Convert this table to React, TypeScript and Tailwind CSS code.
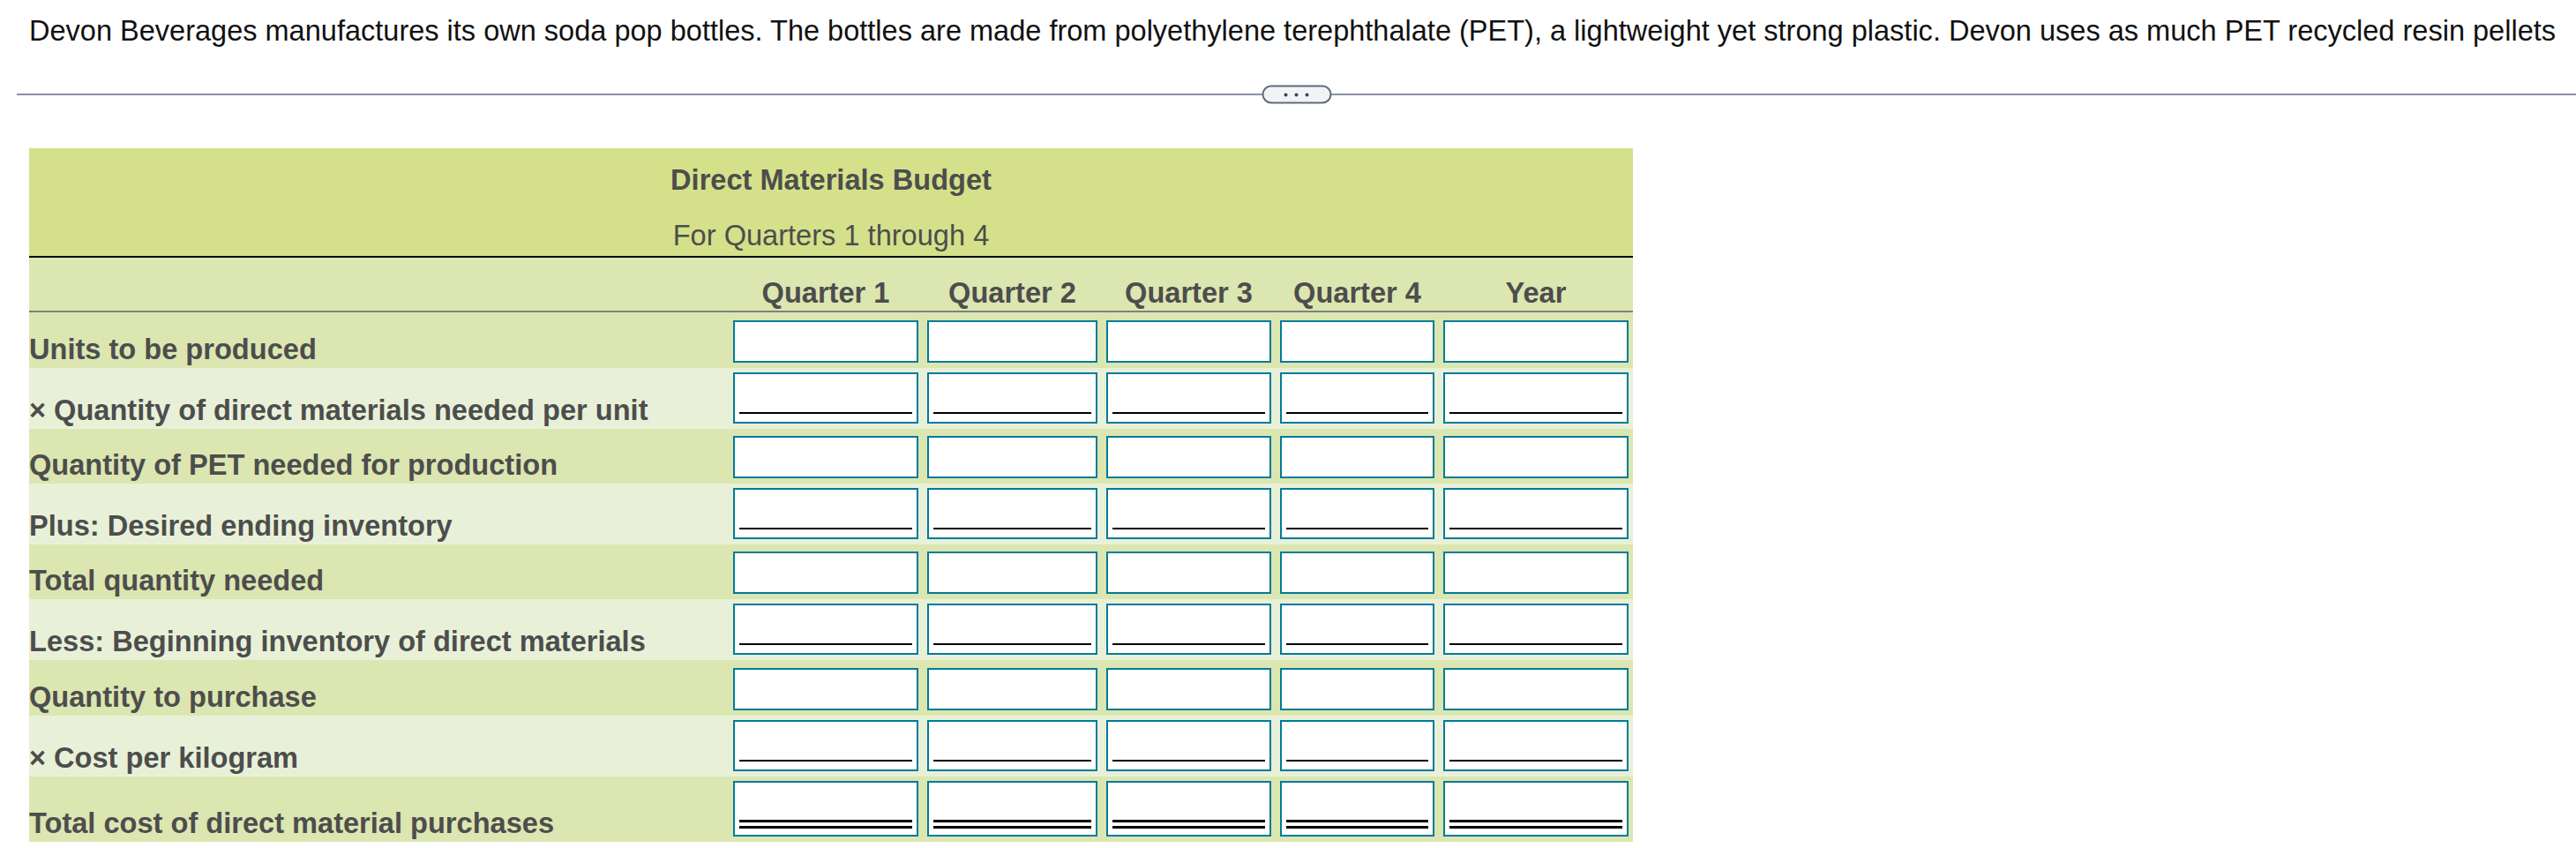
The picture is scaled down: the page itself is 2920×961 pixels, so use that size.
import React from "react";

type Kind = "plain" | "single" | "double";

const rows: { label: string; kind: Kind; h: string; bg: string }[] = [
  { label: "Units to be produced", kind: "plain", h: "h-[63px]", bg: "bg-[#dbe6b1]" },
  { label: "× Quantity of direct materials needed per unit", kind: "single", h: "h-[69px]", bg: "bg-[#e8f1d8]" },
  { label: "Quantity of PET needed for production", kind: "plain", h: "h-[62px]", bg: "bg-[#dbe6b1]" },
  { label: "Plus: Desired ending inventory", kind: "single", h: "h-[69px]", bg: "bg-[#e8f1d8]" },
  { label: "Total quantity needed", kind: "plain", h: "h-[62px]", bg: "bg-[#dbe6b1]" },
  { label: "Less: Beginning inventory of direct materials", kind: "single", h: "h-[69px]", bg: "bg-[#e8f1d8]" },
  { label: "Quantity to purchase", kind: "plain", h: "h-[63px]", bg: "bg-[#dbe6b1]" },
  { label: "× Cost per kilogram", kind: "single", h: "h-[69px]", bg: "bg-[#e8f1d8]" },
  { label: "Total cost of direct material purchases", kind: "double", h: "h-[74px]", bg: "bg-[#dbe6b1]" },
];

const cols = ["Quarter 1", "Quarter 2", "Quarter 3", "Quarter 4", "Year"];

const gridCols = "grid grid-cols-[793px_220px_203px_197px_185px_220px]";

function InputBox({ kind }: { kind: Kind }) {
  if (kind === "plain") {
    return <div className="mx-[5px] h-[48px] border-2 border-[#007b9a] bg-white" />;
  }
  if (kind === "single") {
    return (
      <div className="mx-[5px] flex h-[58px] flex-col justify-end border-2 border-[#007b9a] bg-white px-[5px] pb-[9px]">
        <div className="h-[2px] bg-black" />
      </div>
    );
  }
  return (
    <div className="mx-[5px] flex h-[63px] flex-col justify-end gap-[4px] border-2 border-[#007b9a] bg-white px-[5px] pb-[7px]">
      <div className="h-[3px] bg-black" />
      <div className="h-[3px] bg-black" />
    </div>
  );
}

export default function App() {
  return (
    <div className="h-[961px] w-[2920px] overflow-hidden bg-white font-['Liberation_Sans',Arial,sans-serif]">
      <p className="overflow-hidden whitespace-nowrap pl-[33px] pt-[17px] text-[32.5px] leading-[37px] tracking-[0.01px] text-[#111]">
        Devon Beverages manufactures its own soda pop bottles. The bottles are made from polyethylene terephthalate
        (PET), a lightweight yet strong plastic. Devon uses as much PET recycled resin pellets
      </p>

      <div className="relative ml-[19px] mt-[52px] h-[2px] bg-[#8a92a3]">
        <button className="absolute left-1/2 top-1/2 flex h-[21px] w-[79px] -translate-x-1/2 -translate-y-1/2 items-center justify-center gap-[8px] rounded-full border-2 border-[#5f6b7d] bg-[#f2f3f6]">
          <span className="h-[4px] w-[4px] rounded-full bg-[#3d4451]" />
          <span className="h-[4px] w-[4px] rounded-full bg-[#3d4451]" />
          <span className="h-[4px] w-[4px] rounded-full bg-[#3d4451]" />
        </button>
      </div>

      <div className="ml-[33px] mt-[60px] w-[1818px] text-[32.6px] leading-[37px] text-[#4d4d4d]">
        <div className="flex flex-col items-center border-b-2 border-black bg-[#d4e18a] pb-[5px] pt-[17px]">
          <div className="font-bold">Direct Materials Budget</div>
          <div className="mt-[26px]">For Quarters 1 through 4</div>
        </div>

        <div className={`${gridCols} h-[62px] items-end border-b-2 border-[#808080] bg-[#dbe6b1] pb-[2px] font-bold`}>
          <div />
          {cols.map((c) => (
            <div key={c} className="text-center">
              {c}
            </div>
          ))}
        </div>

        {rows.map((r) => (
          <div key={r.label} className={`${gridCols} ${r.h} ${r.bg} items-end`}>
            <div className="pb-[3px] font-bold">{r.label}</div>
            {cols.map((c) => (
              <div key={c} className="pb-[6px]">
                <InputBox kind={r.kind} />
              </div>
            ))}
          </div>
        ))}
      </div>
    </div>
  );
}
